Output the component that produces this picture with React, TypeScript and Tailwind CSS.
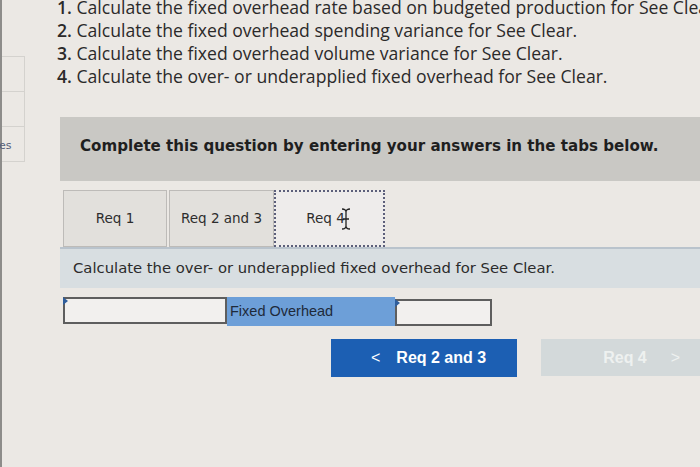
export default function App() {
  return (
    <div className="relative h-[467px] w-[700px] overflow-hidden bg-[#ebe8e4] font-['Open_Sans',sans-serif]">
      {/* left edge + side panel */}
      <div className="absolute left-0 top-0 h-full w-[2px] bg-[#8d8c8a]" />
      <div className="absolute left-[2px] top-[56px] flex w-[23px] flex-col">
        <div className="h-[36px] border border-l-0 border-[#d4d2ce]" />
        <div className="h-[35px] border border-l-0 border-t-0 border-[#d4d2ce]" />
        <div className="flex h-[35px] items-center border border-l-0 border-t-0 border-[#d4d2ce] font-['DejaVu_Sans',sans-serif] text-[11px] text-[#55607a]">
          <span className="-ml-[3px] mt-[4px]">es</span>
        </div>
      </div>

      {/* numbered list */}
      <ol className="-mt-[4px] ml-[57px] text-[17.6px] leading-[23px] text-[#2b2a2a] whitespace-nowrap">
        <li><span className="font-semibold">1.</span> Calculate the fixed overhead rate based on budgeted production for See Clear.</li>
        <li><span className="font-semibold">2.</span> Calculate the fixed overhead spending variance for See Clear.</li>
        <li><span className="font-semibold">3.</span> Calculate the fixed overhead volume variance for See Clear.</li>
        <li><span className="font-semibold">4.</span> Calculate the over- or underapplied fixed overhead for See Clear.</li>
      </ol>

      <div className="ml-[60px] mt-[29px]">
        {/* banner */}
        <div className="flex h-[64px] items-center bg-[#c9c8c4] pb-[6px] pl-[20px] font-['DejaVu_Sans',sans-serif] text-[15.1px] font-bold text-[#1f1f1f]">
          Complete this question by entering your answers in the tabs below.
        </div>

        {/* tabs */}
        <div className="mt-[9px] flex h-[57px] items-stretch pl-[3px] font-['DejaVu_Sans',sans-serif] text-[13.5px] text-[#2d2d2d]">
          <div className="flex w-[104px] items-center justify-center border border-[#bdbbb8] bg-[#e2e0dc]">Req 1</div>
          <div className="ml-[2px] flex w-[105px] items-center justify-center border border-[#bdbbb8] bg-[#e2e0dc]">Req 2 and 3</div>
          <div className="relative flex w-[111px] items-center justify-center border-2 border-dotted border-[#5c5f7a] bg-[#eeeceb]">
            <span className="-ml-[8px]">Req 4</span>
            <svg className="absolute left-[64px] top-[16px]" width="12" height="22" viewBox="0 0 12 22">
              <path d="M2 1 Q6 1 6 4 Q6 1 10 1 M6 4 V18 M2 21 Q6 21 6 18 Q6 21 10 21 M3 11 H9" stroke="#222" strokeWidth="1.3" fill="none" />
            </svg>
          </div>
        </div>

        {/* instructions panel */}
        <div className="flex h-[41px] items-center border-t-2 border-[#b9c3cc] bg-[#d8dee1] pl-[13px] font-['DejaVu_Sans',sans-serif] text-[14.8px] text-[#2b2b2b]">
          Calculate the over- or underapplied fixed overhead for See Clear.
        </div>

        {/* input row */}
        <div className="mt-[9px] flex items-start pl-[3px]">
          <div className="relative h-[27px] w-[164px] border-2 border-[#5e5e5e] bg-[#f2f0ee]">
            <span className="absolute -left-[2px] -top-[2px] h-0 w-0 border-y-[4px] border-l-[5px] border-y-transparent border-l-[#2f5e9c]" />
          </div>
          <div className="flex h-[29px] w-[168px] items-center bg-[#6d9fd8] pl-[3px] font-['Liberation_Sans',sans-serif] text-[14.5px] text-[#1e2a3a]">
            Fixed Overhead
          </div>
          <div className="relative mt-[2px] h-[27px] w-[97px] border-2 border-[#5e5e5e] bg-[#f2f0ee]">
            <span className="absolute -left-[2px] -top-[2px] h-0 w-0 border-y-[4px] border-l-[5px] border-y-transparent border-l-[#2f5e9c]" />
          </div>
        </div>

        {/* nav buttons */}
        <div className="mt-[13px] flex pl-[271px] font-['Liberation_Sans',sans-serif] text-[16px] font-bold">
          <div className="flex h-[38px] w-[188px] items-center bg-[#1c5fb3] pl-[40px] text-white">
            <span className="mr-[16px] font-normal">&lt;</span>Req 2 and 3
          </div>
          <div className="ml-[24px] flex h-[37px] w-[160px] items-center bg-[#d3d9da] pl-[62px] text-[#eef1f0]">
            Req 4<span className="ml-[24px] font-normal">&gt;</span>
          </div>
        </div>
      </div>
    </div>
  );
}
